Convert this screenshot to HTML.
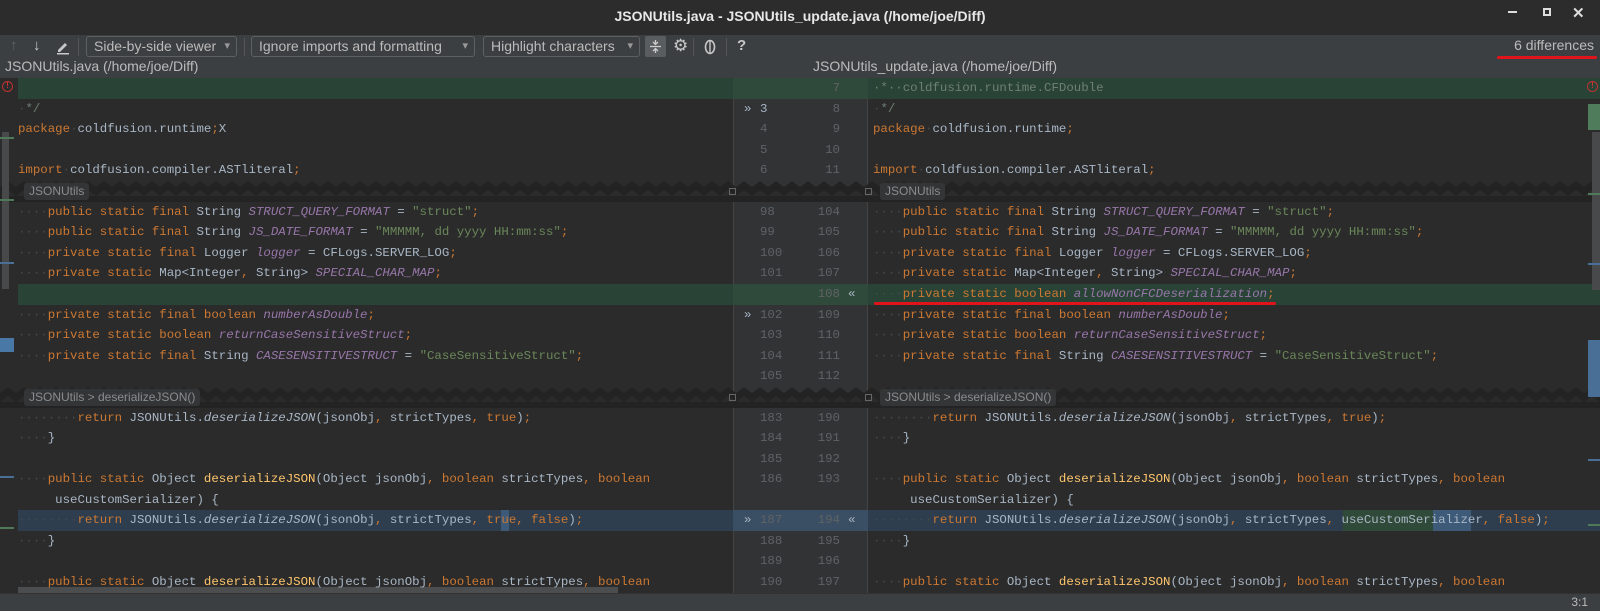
<!DOCTYPE html>
<html><head><meta charset="utf-8"><style>
*{margin:0;padding:0;box-sizing:border-box}
body{width:1600px;height:611px;overflow:hidden;background:#2b2b2b;font-family:"Liberation Sans",sans-serif;position:relative}
.a{position:absolute}
.title{left:0;top:0;width:1600px;height:35px;background:#2c2c2c;color:#e8e8e8;font-weight:bold;font-size:14px;text-align:center;line-height:33px}
.tb{left:0;top:35px;width:1600px;height:43px;background:#3c3f41}
.dd{position:absolute;top:36px;height:21px;border:1px solid #5e6060;border-radius:3px;color:#bbbbbb;font-size:14px;line-height:19px;padding-left:7px;background:#3c3f41}
.dd:after{content:"▾";position:absolute;right:6px;top:0;font-size:11px;color:#9a9a9a}
.sep{position:absolute;top:38px;width:1px;height:18px;background:#555}
.hdr{font-size:14px;color:#bbbbbb;top:58px}
.row{position:absolute;height:21px;line-height:20.6px;font-family:"Liberation Mono",monospace;font-size:12.4px;color:#a9b7c6;white-space:pre}
.k{color:#cc7832}.p{color:#9876aa;font-style:italic}.s{color:#6a8759}.d{color:#46494b}.m{color:#ffc66d}.i{font-style:italic}.c{color:#6f7f73}
.ln{position:absolute;font-family:"Liberation Mono",monospace;font-size:12.4px;color:#5f6365;line-height:20.6px;height:21px}
.chip{position:absolute;top:2px;height:17px;background:#333536;border-radius:3px;color:#8a8d8f;font-size:12px;line-height:17px;padding:0 5px}
.fi{position:absolute;width:7px;height:7px;border:1px solid #666}
</style></head><body>
<div class="a title">JSONUtils.java - JSONUtils_update.java (/home/joe/Diff)</div>
<div class="a" style="left:1508px;top:11px;width:9px;height:2px;background:#ddd"></div>
<div class="a" style="left:1543px;top:8px;width:8px;height:8px;border:2px solid #ddd"></div>
<div class="a" style="left:1572px;top:4px;color:#ddd;font-size:15px;font-weight:bold">✕</div>
<div class="a tb"></div>
<div class="a" style="left:10px;top:37px;color:#5f6365;font-size:15px">↑</div>
<div class="a" style="left:33px;top:37px;color:#c8c8c8;font-size:15px">↓</div>
<svg class="a" style="left:55px;top:39px" width="16" height="16"><path d="M3 11 L10 4 L12 6 L5 13 L3 13Z" fill="#c8c8c8"/><rect x="2" y="14" width="12" height="1.5" fill="#c8c8c8"/></svg>
<div class="sep" style="left:78px"></div>
<div class="dd" style="left:86px;width:151px">Side-by-side viewer</div>
<div class="sep" style="left:244px"></div>
<div class="dd" style="left:251px;width:224px">Ignore imports and formatting</div>
<div class="dd" style="left:483px;width:157px">Highlight characters</div>
<div class="a" style="left:645px;top:36px;width:21px;height:21px;background:#5a5d5f;border-radius:2px"></div>
<svg class="a" style="left:648px;top:39px" width="15" height="15"><path d="M2 7.5H13M7.5 1V5M5 3L7.5 5.5L10 3M7.5 14V10M5 12L7.5 9.5L10 12" stroke="#ccc" stroke-width="1.3" fill="none"/></svg>
<div class="a" style="left:673px;top:36px;color:#c8c8c8;font-size:17px">⚙</div>
<div class="sep" style="left:693px"></div>
<svg class="a" style="left:703px;top:38px" width="14" height="18"><ellipse cx="7" cy="9" rx="4.5" ry="6.5" stroke="#c8c8c8" stroke-width="1.6" fill="none"/><path d="M7 3V15" stroke="#c8c8c8" stroke-width="1.4"/></svg>
<div class="sep" style="left:726px"></div>
<div class="a" style="left:737px;top:37px;color:#c8c8c8;font-size:15px;font-weight:bold">?</div>
<div class="a" style="right:6px;top:37px;color:#bbbbbb;font-size:14px">6 differences</div>
<div class="a" style="left:1497px;top:56px;width:100px;height:3px;background:#e0141a;border-radius:2px"></div>
<div class="a hdr" style="left:5px">JSONUtils.java (/home/joe/Diff)</div>
<div class="a hdr" style="left:813px">JSONUtils_update.java (/home/joe/Diff)</div>

<div class="a" style="left:733px;top:78px;width:135px;height:515px;background:#313335;border-left:1px solid #444;border-right:1px solid #444"></div>

<div class="a" style="left:18px;top:78px;width:715px;height:21px;background:#294436"></div>
<div class="a" style="left:733px;top:78px;width:135px;height:21px;background:#2f4a3a"></div>
<div class="a" style="left:868px;top:78px;width:732px;height:21px;background:#294436"></div>
<div class="a" style="left:18px;top:284px;width:715px;height:21px;background:#294436"></div>
<div class="a" style="left:733px;top:284px;width:135px;height:21px;background:#2f4a3a"></div>
<div class="a" style="left:868px;top:284px;width:732px;height:21px;background:#294436"></div>
<div class="a" style="left:18px;top:510px;width:715px;height:21px;background:#2e3e4e"></div>
<div class="a" style="left:733px;top:510px;width:135px;height:21px;background:#3a4f64"></div>
<div class="a" style="left:868px;top:510px;width:732px;height:21px;background:#2e3e4e"></div>
<div class="a" style="left:501px;top:510px;width:8px;height:21px;background:#3d5a78"></div>
<div class="a" style="left:1343px;top:510px;width:90px;height:21px;background:#2f4a38"></div>
<div class="a" style="left:1433px;top:510px;width:38px;height:21px;background:#3d5a78"></div>

<svg class="a" style="left:0;top:181px" width="1600" height="21"><defs><pattern id="z" width="16" height="21" patternUnits="userSpaceOnUse"><path d="M0 6L8 0L16 6V21H0Z" fill="#232323"/><path d="M0 15L8 9L16 15" fill="#2b2b2b"/></pattern></defs><rect width="1600" height="21" fill="url(#z)"/></svg>
<svg class="a" style="left:0;top:387px" width="1600" height="21"><rect width="1600" height="21" fill="url(#z)"/></svg>
<div class="chip" style="left:24px;top:183px">JSONUtils</div>
<div class="chip" style="left:880px;top:183px">JSONUtils</div>
<div class="chip" style="left:24px;top:389px">JSONUtils &gt; deserializeJSON()</div>
<div class="chip" style="left:880px;top:389px">JSONUtils &gt; deserializeJSON()</div>
<div class="fi" style="left:729px;top:188px"></div>
<div class="fi" style="left:865px;top:188px"></div>
<div class="fi" style="left:729px;top:394px"></div>
<div class="fi" style="left:865px;top:394px"></div>

<div class="a" style="left:2px;top:81px;width:11px;height:11px;border:1.5px solid #b33;border-radius:50%;color:#c33;font-size:8px;line-height:8px;text-align:center;font-weight:bold">!</div>
<div class="a" style="left:1587px;top:81px;width:11px;height:11px;border:1.5px solid #b33;border-radius:50%;color:#c33;font-size:8px;line-height:8px;text-align:center;font-weight:bold">!</div>

<div class="a" style="left:2px;top:132px;width:7px;height:157px;background:#48494a"></div>
<div class="a" style="left:0;top:137px;width:14px;height:2px;background:#4f7a5a"></div>
<div class="a" style="left:0;top:199px;width:14px;height:2px;background:#4f7a5a"></div>
<div class="a" style="left:0;top:262px;width:14px;height:2px;background:#4a6f96"></div>
<div class="a" style="left:0;top:338px;width:14px;height:14px;background:#4a78a6"></div>
<div class="a" style="left:0;top:476px;width:14px;height:2px;background:#4a6f96"></div>
<div class="a" style="left:0;top:527px;width:14px;height:2px;background:#4f7a5a"></div>
<div class="a" style="left:1592px;top:132px;width:8px;height:158px;background:#48494a"></div>
<div class="a" style="left:1588px;top:104px;width:12px;height:26px;background:#4f7d5b"></div>
<div class="a" style="left:1588px;top:193px;width:12px;height:2px;background:#4f7a5a"></div>
<div class="a" style="left:1588px;top:263px;width:12px;height:2px;background:#4a6f96"></div>
<div class="a" style="left:1588px;top:340px;width:12px;height:57px;background:#4a6f96"></div>
<div class="a" style="left:1588px;top:459px;width:12px;height:2px;background:#4a6f96"></div>
<div class="a" style="left:1588px;top:524px;width:12px;height:2px;background:#4f7a5a"></div>
<div class="a" style="left:18px;top:587px;width:600px;height:6px;background:#4b4d4f"></div>

<div class="ln" style="left:813px;top:78px;width:27px;text-align:right">7</div>
<div class="ln" style="left:744px;top:99px;color:#a9b7c6">»</div><div class="ln" style="left:760px;top:99px;color:#a9b7c6">3</div><div class="ln" style="left:813px;top:99px;width:27px;text-align:right">8</div>
<div class="ln" style="left:760px;top:119px">4</div><div class="ln" style="left:813px;top:119px;width:27px;text-align:right">9</div>
<div class="ln" style="left:760px;top:140px">5</div><div class="ln" style="left:813px;top:140px;width:27px;text-align:right">10</div>
<div class="ln" style="left:760px;top:160px">6</div><div class="ln" style="left:813px;top:160px;width:27px;text-align:right">11</div>
<div class="ln" style="left:760px;top:202px">98</div><div class="ln" style="left:813px;top:202px;width:27px;text-align:right">104</div>
<div class="ln" style="left:760px;top:222px">99</div><div class="ln" style="left:813px;top:222px;width:27px;text-align:right">105</div>
<div class="ln" style="left:760px;top:243px">100</div><div class="ln" style="left:813px;top:243px;width:27px;text-align:right">106</div>
<div class="ln" style="left:760px;top:263px">101</div><div class="ln" style="left:813px;top:263px;width:27px;text-align:right">107</div>
<div class="ln" style="left:813px;top:284px;width:27px;text-align:right">108</div><div class="ln" style="left:848px;top:284px;color:#a9b7c6">«</div>
<div class="ln" style="left:744px;top:305px;color:#a9b7c6">»</div><div class="ln" style="left:760px;top:305px">102</div><div class="ln" style="left:813px;top:305px;width:27px;text-align:right">109</div>
<div class="ln" style="left:760px;top:325px">103</div><div class="ln" style="left:813px;top:325px;width:27px;text-align:right">110</div>
<div class="ln" style="left:760px;top:346px">104</div><div class="ln" style="left:813px;top:346px;width:27px;text-align:right">111</div>
<div class="ln" style="left:760px;top:366px">105</div><div class="ln" style="left:813px;top:366px;width:27px;text-align:right">112</div>
<div class="ln" style="left:760px;top:408px">183</div><div class="ln" style="left:813px;top:408px;width:27px;text-align:right">190</div>
<div class="ln" style="left:760px;top:428px">184</div><div class="ln" style="left:813px;top:428px;width:27px;text-align:right">191</div>
<div class="ln" style="left:760px;top:449px">185</div><div class="ln" style="left:813px;top:449px;width:27px;text-align:right">192</div>
<div class="ln" style="left:760px;top:469px">186</div><div class="ln" style="left:813px;top:469px;width:27px;text-align:right">193</div>
<div class="ln" style="left:744px;top:510px;color:#a9b7c6">»</div><div class="ln" style="left:760px;top:510px">187</div><div class="ln" style="left:813px;top:510px;width:27px;text-align:right">194</div><div class="ln" style="left:848px;top:510px;color:#a9b7c6">«</div>
<div class="ln" style="left:760px;top:531px">188</div><div class="ln" style="left:813px;top:531px;width:27px;text-align:right">195</div>
<div class="ln" style="left:760px;top:551px">189</div><div class="ln" style="left:813px;top:551px;width:27px;text-align:right">196</div>
<div class="ln" style="left:760px;top:572px">190</div><div class="ln" style="left:813px;top:572px;width:27px;text-align:right">197</div>

<div class="row" style="left:18px;top:99px"><span class="d">·</span><span class="c">*/</span></div>
<div class="row" style="left:18px;top:119px"><span class="k">package</span><span class="d">·</span>coldfusion.runtime<span class="k">;</span>X</div>
<div class="row" style="left:18px;top:160px"><span class="k">import</span><span class="d">·</span>coldfusion.compiler.ASTliteral<span class="k">;</span></div>
<div class="row" style="left:18px;top:202px"><span class="d">····</span><span class="k">public static final</span> String <span class="p">STRUCT_QUERY_FORMAT</span> = <span class="s">"struct"</span><span class="k">;</span></div>
<div class="row" style="left:18px;top:222px"><span class="d">····</span><span class="k">public static final</span> String <span class="p">JS_DATE_FORMAT</span> = <span class="s">"MMMMM, dd yyyy HH:mm:ss"</span><span class="k">;</span></div>
<div class="row" style="left:18px;top:243px"><span class="d">····</span><span class="k">private static final</span> Logger <span class="p">logger</span> = CFLogs.SERVER_LOG<span class="k">;</span></div>
<div class="row" style="left:18px;top:263px"><span class="d">····</span><span class="k">private static</span> Map&lt;Integer<span class="k">,</span> String&gt; <span class="p">SPECIAL_CHAR_MAP</span><span class="k">;</span></div>
<div class="row" style="left:18px;top:305px"><span class="d">····</span><span class="k">private static final boolean</span> <span class="p">numberAsDouble</span><span class="k">;</span></div>
<div class="row" style="left:18px;top:325px"><span class="d">····</span><span class="k">private static boolean</span> <span class="p">returnCaseSensitiveStruct</span><span class="k">;</span></div>
<div class="row" style="left:18px;top:346px"><span class="d">····</span><span class="k">private static final</span> String <span class="p">CASESENSITIVESTRUCT</span> = <span class="s">"CaseSensitiveStruct"</span><span class="k">;</span></div>
<div class="row" style="left:18px;top:408px"><span class="d">········</span><span class="k">return</span> JSONUtils.<span class="i">deserializeJSON</span>(jsonObj<span class="k">,</span> strictTypes<span class="k">, true</span>)<span class="k">;</span></div>
<div class="row" style="left:18px;top:428px"><span class="d">····</span>}</div>
<div class="row" style="left:18px;top:469px"><span class="d">····</span><span class="k">public static</span> Object <span class="m">deserializeJSON</span>(Object jsonObj<span class="k">, boolean</span> strictTypes<span class="k">, boolean</span></div>
<div class="row" style="left:18px;top:490px">     useCustomSerializer) {</div>
<div class="row" style="left:18px;top:510px"><span class="d">········</span><span class="k">return</span> JSONUtils.<span class="i">deserializeJSON</span>(jsonObj<span class="k">,</span> strictTypes<span class="k">, true, false</span>)<span class="k">;</span></div>
<div class="row" style="left:18px;top:531px"><span class="d">····</span>}</div>
<div class="row" style="left:18px;top:572px"><span class="d">····</span><span class="k">public static</span> Object <span class="m">deserializeJSON</span>(Object jsonObj<span class="k">, boolean</span> strictTypes<span class="k">, boolean</span></div>

<div class="row" style="left:873px;top:78px"><span class="c">·*··coldfusion.runtime.CFDouble</span></div>
<div class="row" style="left:873px;top:99px"><span class="d">·</span><span class="c">*/</span></div>
<div class="row" style="left:873px;top:119px"><span class="k">package</span><span class="d">·</span>coldfusion.runtime<span class="k">;</span></div>
<div class="row" style="left:873px;top:160px"><span class="k">import</span><span class="d">·</span>coldfusion.compiler.ASTliteral<span class="k">;</span></div>
<div class="row" style="left:873px;top:202px"><span class="d">····</span><span class="k">public static final</span> String <span class="p">STRUCT_QUERY_FORMAT</span> = <span class="s">"struct"</span><span class="k">;</span></div>
<div class="row" style="left:873px;top:222px"><span class="d">····</span><span class="k">public static final</span> String <span class="p">JS_DATE_FORMAT</span> = <span class="s">"MMMMM, dd yyyy HH:mm:ss"</span><span class="k">;</span></div>
<div class="row" style="left:873px;top:243px"><span class="d">····</span><span class="k">private static final</span> Logger <span class="p">logger</span> = CFLogs.SERVER_LOG<span class="k">;</span></div>
<div class="row" style="left:873px;top:263px"><span class="d">····</span><span class="k">private static</span> Map&lt;Integer<span class="k">,</span> String&gt; <span class="p">SPECIAL_CHAR_MAP</span><span class="k">;</span></div>
<div class="row" style="left:873px;top:284px"><span class="d">····</span><span class="k">private static boolean</span> <span class="p">allowNonCFCDeserialization</span><span class="k">;</span></div>
<div class="a" style="left:874px;top:302px;width:402px;height:3px;background:#e0141a;border-radius:2px"></div>
<div class="row" style="left:873px;top:305px"><span class="d">····</span><span class="k">private static final boolean</span> <span class="p">numberAsDouble</span><span class="k">;</span></div>
<div class="row" style="left:873px;top:325px"><span class="d">····</span><span class="k">private static boolean</span> <span class="p">returnCaseSensitiveStruct</span><span class="k">;</span></div>
<div class="row" style="left:873px;top:346px"><span class="d">····</span><span class="k">private static final</span> String <span class="p">CASESENSITIVESTRUCT</span> = <span class="s">"CaseSensitiveStruct"</span><span class="k">;</span></div>
<div class="row" style="left:873px;top:408px"><span class="d">········</span><span class="k">return</span> JSONUtils.<span class="i">deserializeJSON</span>(jsonObj<span class="k">,</span> strictTypes<span class="k">, true</span>)<span class="k">;</span></div>
<div class="row" style="left:873px;top:428px"><span class="d">····</span>}</div>
<div class="row" style="left:873px;top:469px"><span class="d">····</span><span class="k">public static</span> Object <span class="m">deserializeJSON</span>(Object jsonObj<span class="k">, boolean</span> strictTypes<span class="k">, boolean</span></div>
<div class="row" style="left:873px;top:490px">     useCustomSerializer) {</div>
<div class="row" style="left:873px;top:510px"><span class="d">········</span><span class="k">return</span> JSONUtils.<span class="i">deserializeJSON</span>(jsonObj<span class="k">,</span> strictTypes<span class="k">,</span> useCustomSerializer<span class="k">, false</span>)<span class="k">;</span></div>
<div class="row" style="left:873px;top:531px"><span class="d">····</span>}</div>
<div class="row" style="left:873px;top:572px"><span class="d">····</span><span class="k">public static</span> Object <span class="m">deserializeJSON</span>(Object jsonObj<span class="k">, boolean</span> strictTypes<span class="k">, boolean</span></div>

<div class="a" style="left:0;top:593px;width:1600px;height:18px;background:#3c3f41;border-top:1px solid #323232"></div>
<div class="a" style="right:12px;top:595px;color:#bbbbbb;font-size:12px">3:1</div>
</body></html>
